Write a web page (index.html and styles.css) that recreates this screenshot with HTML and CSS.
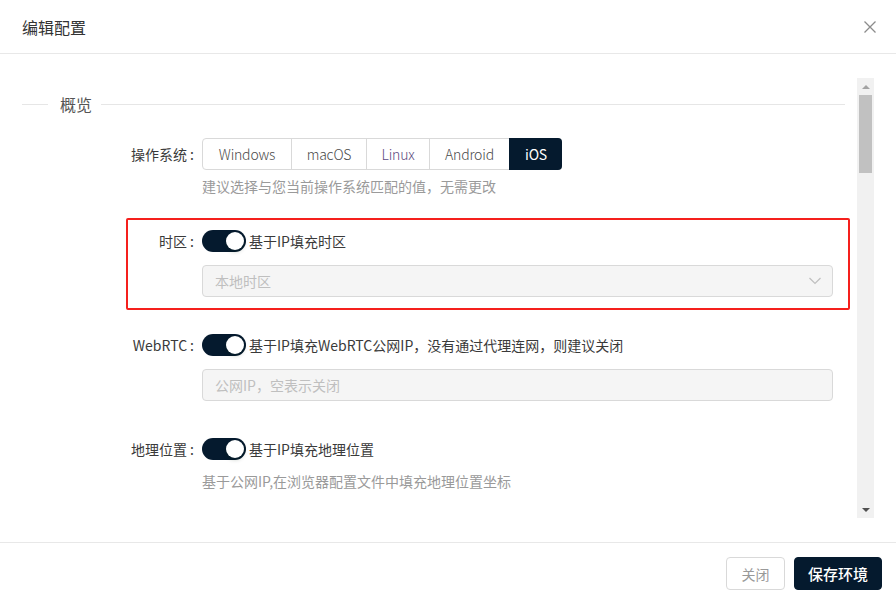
FILE: index.html
```html
<!DOCTYPE html>
<html lang="zh-CN">
<head>
<meta charset="utf-8">
<title>编辑配置</title>
<link rel="stylesheet" href="styles.css">
</head>
<body>
<div class="modal">
  <header class="modal-header">
    <span class="modal-title">编辑配置</span>
    <button class="modal-close" aria-label="关闭">
      <svg width="12" height="12" viewBox="0 0 12 12"><path d="M0.5 0.5 L11.5 11.5 M11.5 0.5 L0.5 11.5" stroke="#8c8c8c" stroke-width="1.3" fill="none"/></svg>
    </button>
  </header>
  <div class="modal-body">
    <div class="scroll-area">
      <div class="scroll-content">
        <div class="divider">
          <span class="divider-line short"></span>
          <span class="divider-text">概览</span>
          <span class="divider-line"></span>
        </div>
        <div class="form">
          <div class="form-item item-os">
            <label class="form-label">操作系统<span class="colon">:</span></label>
            <div class="form-control">
              <div class="control-row">
                <div class="segmented">
                  <span class="seg seg-windows">Windows</span>
                  <span class="seg seg-macos">macOS</span>
                  <span class="seg seg-linux">Linux</span>
                  <span class="seg seg-android">Android</span>
                  <span class="seg seg-ios active">iOS</span>
                </div>
              </div>
              <div class="hint">建议选择与您当前操作系统匹配的值，无需更改</div>
            </div>
          </div>

          <div class="form-item item-block highlighted">
            <label class="form-label">时区<span class="colon">:</span></label>
            <div class="form-control">
              <div class="control-row">
                <span class="switch"><span class="knob"></span></span>
                <span class="switch-text">基于IP填充时区</span>
              </div>
              <div class="field select">
                <span class="placeholder">本地时区</span>
                <svg class="chevron" width="12" height="8" viewBox="0 0 12 8"><path d="M0.5 1 L6 6.5 L11.5 1" stroke="#bfbfbf" stroke-width="1.2" fill="none"/></svg>
              </div>
            </div>
            <div class="highlight-box"></div>
          </div>

          <div class="form-item item-block">
            <label class="form-label">WebRTC<span class="colon">:</span></label>
            <div class="form-control">
              <div class="control-row">
                <span class="switch"><span class="knob"></span></span>
                <span class="switch-text">基于IP填充WebRTC公网IP，没有通过代理连网，则建议关闭</span>
              </div>
              <div class="field">
                <span class="placeholder">公网IP，空表示关闭</span>
              </div>
            </div>
          </div>

          <div class="form-item">
            <label class="form-label">地理位置<span class="colon">:</span></label>
            <div class="form-control">
              <div class="control-row">
                <span class="switch"><span class="knob"></span></span>
                <span class="switch-text">基于IP填充地理位置</span>
              </div>
              <div class="hint">基于公网IP,在浏览器配置文件中填充地理位置坐标</div>
            </div>
          </div>
        </div>
      </div>
      <div class="scrollbar">
        <div class="sb-btn"><span class="arrow-up"></span></div>
        <div class="sb-track"><div class="sb-thumb"></div></div>
        <div class="sb-btn"><span class="arrow-down"></span></div>
      </div>
    </div>
  </div>
  <footer class="modal-footer">
    <button class="btn btn-default">关闭</button>
    <button class="btn btn-primary">保存环境</button>
  </footer>
</div>
</body>
</html>
```

FILE: styles.css
```css
* { box-sizing: border-box; }
html, body { margin: 0; padding: 0; background: #fff; }
body {
  font-family: "Noto Sans CJK SC", "Noto Sans", sans-serif;
  font-size: 14px;
  color: #3a3a3a;
  width: 896px;
  height: 601px;
  overflow: hidden;
}
.modal { width: 896px; height: 601px; display: flex; flex-direction: column; background: #fff; }

.modal-header {
  height: 54px;
  border-bottom: 1px solid #e8e8e8;
  display: flex;
  align-items: center;
  justify-content: space-between;
  padding: 0 20px 0 22px;
}
.modal-title { font-size: 16px; color: #333; line-height: 22px; }
.modal-close { background: none; border: 0; padding: 0; width: 12px; height: 12px; display: flex; cursor: pointer; }

.modal-body { height: 488px; padding: 24px 22px 24px 22px; }
.scroll-area { height: 440px; display: flex; }
.scroll-content { flex: 1; overflow: hidden; padding-right: 12px; }

.divider { display: flex; align-items: center; height: 22px; margin-top: 15px; }
.divider-line { flex: 1; height: 1px; background: #e6e6e6; }
.divider-line.short { flex: 0 0 26px; }
.divider-text { font-size: 16px; color: #555; padding: 0 9px 0 12px; line-height: 22px; }

.form { margin-top: 23px; padding-right: 12px; }
.form-item { display: flex; position: relative; margin-bottom: 28px; }
.form-item.item-block { margin-bottom: 32px; }
.form-label {
  flex: 0 0 180px;
  height: 32px;
  line-height: 32px;
  text-align: right;
  color: #3a3a3a;
  white-space: nowrap;
}
.colon { margin: 0 8px 0 3px; }
.form-control { flex: 1; min-width: 0; }
.control-row { height: 32px; display: flex; align-items: center; }

.segmented { display: flex; height: 32px; border: 1px solid #d9d9d9; border-radius: 4px; }
.seg {
  line-height: 30px;
  color: #4a4a4a;
  border-left: 1px solid #d9d9d9;
  white-space: nowrap;
  text-align: center;
  font-weight: 300;
  letter-spacing: -0.2px;
}
.seg:first-child { border-left: 0; }
.seg-windows { width: 88px; }
.seg-macos { width: 75px; }
.seg-linux { width: 63px; color: #5b4a7e; }
.seg-android { width: 80px; }
.seg-ios { width: 53px; }
.seg.active {
  background: #051a2e;
  color: #fff;
  border-left-color: #051a2e;
  margin: -1px -1px -1px 0;
  line-height: 32px;
  border-radius: 0 4px 4px 0;
  font-weight: 400;
}

.hint { margin-top: 5px; line-height: 22px; color: #9a9a9a; font-size: 14px; }

.switch {
  width: 44px;
  height: 22px;
  border-radius: 11px;
  background: #051a2e;
  position: relative;
  flex: 0 0 44px;
}
.knob {
  position: absolute;
  top: 2px;
  right: 2px;
  width: 18px;
  height: 18px;
  border-radius: 50%;
  background: #fff;
  box-shadow: 0 2px 4px rgba(0, 35, 11, 0.2);
}
.switch-text { margin-left: 3px; color: #3a3a3a; white-space: nowrap; }

.field {
  margin-top: 8px;
  height: 32px;
  border: 1px solid #d9d9d9;
  border-radius: 4px;
  background: #f5f5f5;
  display: flex;
  align-items: center;
  justify-content: space-between;
  padding: 0 11px 0 12px;
}
.placeholder { color: #bfbfbf; }
.chevron { display: block; }

.highlight-box {
  position: absolute;
  left: 104px;
  top: -7px;
  right: -17px;
  bottom: -13px;
  border: 2px solid #f5201d;
  border-radius: 2px;
  pointer-events: none;
}

.scrollbar { flex: 0 0 17px; background: #f1f1f1; display: flex; flex-direction: column; }
.sb-btn { height: 17px; display: flex; align-items: center; justify-content: center; }
.sb-track { flex: 1; padding: 0 2px; }
.sb-thumb { height: 78px; background: #c1c1c1; }
.arrow-up { width: 0; height: 0; border-left: 4px solid transparent; border-right: 4px solid transparent; border-bottom: 4px solid #a3a3a3; }
.arrow-down { width: 0; height: 0; border-left: 4px solid transparent; border-right: 4px solid transparent; border-top: 4px solid #505050; }

.modal-footer {
  flex: 1;
  border-top: 1px solid #e8e8e8;
  display: flex;
  justify-content: flex-end;
  align-items: flex-start;
  gap: 9px;
  padding: 14px 14px 0 0;
}
.btn {
  height: 33px;
  border-radius: 4px;
  font-family: "Noto Sans CJK SC", sans-serif;
  font-size: 14px;
  cursor: pointer;
  padding: 0;
}
.btn-default { width: 59px; background: #fff; border: 1px solid #d9d9d9; color: #999; }
.btn-primary { width: 88px; background: #051a2e; border: 1px solid #051a2e; color: #fff; font-size: 15px; font-weight: 500; }
```
